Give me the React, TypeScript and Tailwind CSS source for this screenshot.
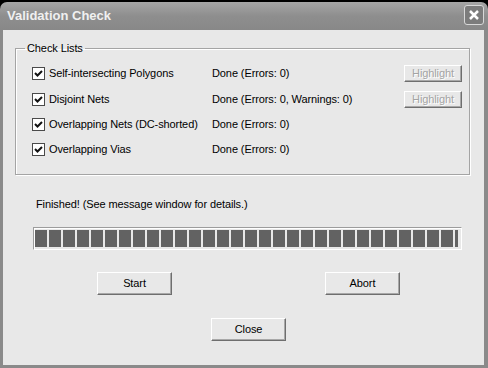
import React from 'react';

const checks = [
    { label: 'Self-intersecting Polygons', status: 'Done (Errors: 0)', highlight: true, h: 'h-[26px]' },
    { label: 'Disjoint Nets', status: 'Done (Errors: 0, Warnings: 0)', highlight: true, h: 'h-[26px]' },
    { label: 'Overlapping Nets (DC-shorted)', status: 'Done (Errors: 0)', highlight: false, h: 'h-[24px]' },
    { label: 'Overlapping Vias', status: 'Done (Errors: 0)', highlight: false, h: 'h-[26px]' },
];

const CheckBox = (): React.JSX.Element => (
    <span className="flex h-[13px] w-[13px] shrink-0 items-center justify-center border border-[#4a4a4a] bg-white">
        <svg width="9" height="9" viewBox="0 0 9 9">
            <path d="M1 4 L3.5 6.5 L8 2" stroke="#111" strokeWidth="2" fill="none" />
        </svg>
    </span>
);

const Button = ({
    children,
    disabled,
    className,
}: {
    children: React.ReactNode;
    disabled?: boolean;
    className: string;
}): React.JSX.Element => (
    <div
        className={`flex items-center justify-center border border-t-white border-l-white border-r-[#6e6e6e] border-b-[#6e6e6e] bg-[#e8e8e8] shadow-[inset_-1px_-1px_0_#a8a8a8] ${className} ${
            disabled ? 'text-[#a4a4a4] [text-shadow:1px_1px_0_#fff]' : 'text-black'
        }`}
    >
        {children}
    </div>
);

export default function App(): React.JSX.Element {
    return (
        <div className="h-[368px] w-[488px] overflow-hidden bg-black pt-[2px] font-['Liberation_Sans',sans-serif] text-[11px] tracking-[-0.1px] text-black">
            <div className="flex h-[366px] flex-col">
                {/* title bar */}
                <div className="flex h-[28px] shrink-0 items-center justify-between rounded-t-[7px] bg-gradient-to-b from-[#a6a6a6] via-[#8e8e8e] to-[#888888] pl-[7px] pr-[4px]">
                    <span className="text-[13px] font-bold tracking-[0px] text-[#f0f0f0]">
                        Validation Check
                    </span>
                    <div className="mb-[2px] flex h-[20px] w-[20px] items-center justify-center rounded-[3px] border border-[#d8d8d8] bg-[#7c7c7c]">
                        <svg width="12" height="12" viewBox="0 0 12 12">
                            <path d="M2 2 L10 10 M10 2 L2 10" stroke="#fff" strokeWidth="2.5" />
                        </svg>
                    </div>
                </div>

                {/* body */}
                <div className="flex flex-1 flex-col border-r-[4px] border-b-[3px] border-l-[3px] border-[#8a8a8a] bg-[#e8e8e8]">
                    <fieldset className="mt-[12px] ml-[12px] h-[133px] w-[455px] border border-[#a4a4a4] shadow-[1px_1px_0_#fff,inset_1px_1px_0_#fff] px-[16px]">
                        <legend className="ml-[-7px] px-[2px] leading-[13px]">Check Lists</legend>
                        <div className="mt-[5px] flex flex-col">
                            {checks.map((c) => (
                                <div key={c.label} className={`flex items-center ${c.h}`}>
                                    <CheckBox />
                                    <span className="ml-[4px] w-[163px] shrink-0">{c.label}</span>
                                    <span className="flex-1">{c.status}</span>
                                    {c.highlight && (
                                        <Button disabled className="mr-[-9px] h-[17px] w-[58px]">
                                            Highlight
                                        </Button>
                                    )}
                                </div>
                            ))}
                        </div>
                    </fieldset>

                    <div className="mt-[23px] pl-[33px] leading-[13px]">
                        Finished! (See message window for details.)
                    </div>

                    <div className="mt-[16px] ml-[30px] flex h-[23px] w-[429px] gap-[2px] border border-t-[#9c9c9c] border-l-[#9c9c9c] border-r-white border-b-white px-[1px] py-[2px] shadow-[inset_1px_1px_0_#fff]">
                        {Array.from({ length: 30 }).map((_, i) => (
                            <div key={i} className="w-[12px] bg-[#626262]" />
                        ))}
                        <div className="w-[3px] bg-[#626262]" />
                    </div>

                    <div className="mt-[22px] flex gap-[153px] pl-[94px]">
                        <Button className="h-[23px] w-[75px]">Start</Button>
                        <Button className="h-[23px] w-[75px]">Abort</Button>
                    </div>

                    <div className="mt-[23px] pl-[208px]">
                        <Button className="h-[23px] w-[75px]">Close</Button>
                    </div>
                </div>
            </div>
        </div>
    );
}
